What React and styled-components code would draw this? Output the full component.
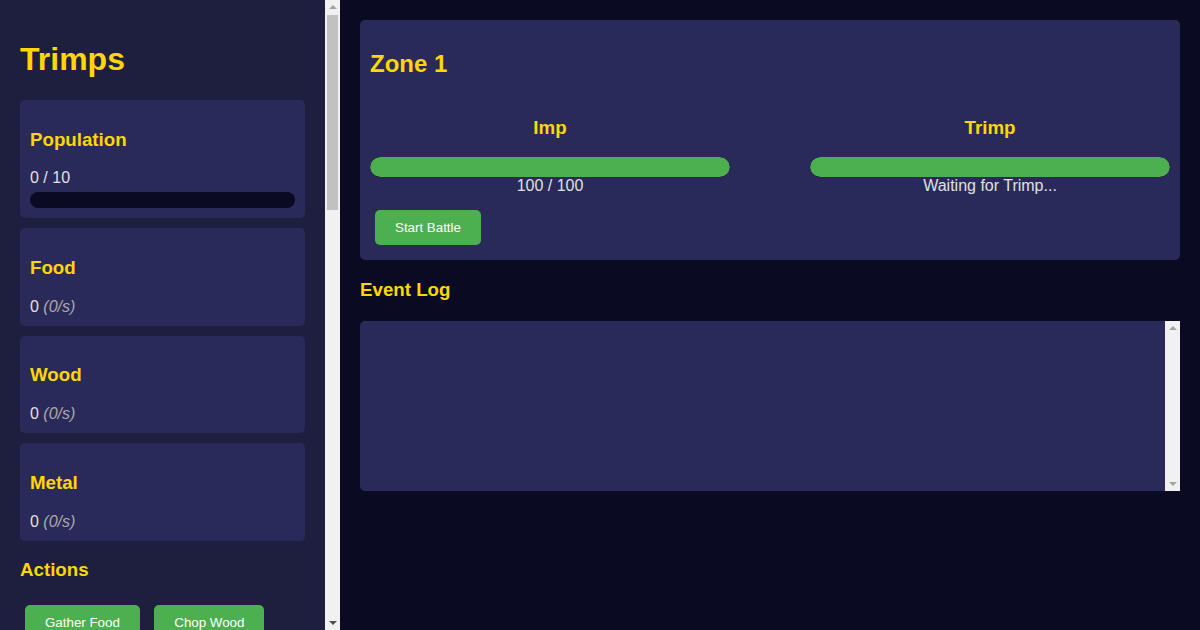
import styled, { createGlobalStyle } from 'styled-components';

const GlobalStyle = createGlobalStyle`
  body {
    margin: 0;
    background: #0a0a23;
    color: #e0e0e0;
    font-family: "Liberation Sans", Arial, sans-serif;
  }
  button {
    font-family: "Liberation Sans", Arial, sans-serif;
  }
`;

const resources = [
  { name: 'Food', amount: 0, rate: 0 },
  { name: 'Wood', amount: 0, rate: 0 },
  { name: 'Metal', amount: 0, rate: 0 },
];

// classic 15px scrollbar, drawn since the page shot hides the native one
function ScrollRail({ thumb, canDown }) {
  return (
    <Rail>
      <RailButton>
        <Arrow $dir="up" />
      </RailButton>
      {thumb ? <Thumb style={{ height: thumb }} /> : null}
      <RailSpace />
      <RailButton>
        <Arrow $dir="down" $active={canDown} />
      </RailButton>
    </Rail>
  );
}

export default function App() {
  return (
    <>
      <GlobalStyle />
      <Layout>
        <Sidebar>
          <SidebarBody>
            <Title>Trimps</Title>
            <Card>
              <CardTitle>Population</CardTitle>
              <div>0 / 10</div>
              <Track $height={16} $gap={5}>
                <Fill style={{ width: '0%' }} />
              </Track>
            </Card>
            {resources.map((r) => (
              <Card key={r.name}>
                <CardTitle>{r.name}</CardTitle>
                <div>
                  {r.amount} <Rate>({r.rate}/s)</Rate>
                </div>
              </Card>
            ))}
            <Section>Actions</Section>
            <div>
              <Button>Gather Food</Button> <Button>Chop Wood</Button>{' '}
              <Button>Mine Metal</Button> <Button>Breed Trimps</Button>
            </div>
          </SidebarBody>
          <ScrollRail thumb={195} canDown />
        </Sidebar>
        <Main>
          <ZoneCard>
            <ZoneTitle>Zone 1</ZoneTitle>
            <Battle>
              <Fighter>
                <CardTitle>Imp</CardTitle>
                <Track $height={20}>
                  <Fill style={{ width: '100%' }} />
                </Track>
                <div>100 / 100</div>
              </Fighter>
              <Fighter>
                <CardTitle>Trimp</CardTitle>
                <Track $height={20}>
                  <Fill style={{ width: '100%' }} />
                </Track>
                <div>Waiting for Trimp...</div>
              </Fighter>
            </Battle>
            <Controls>
              <Button>Start Battle</Button>
            </Controls>
          </ZoneCard>
          <Section>Event Log</Section>
          <Log>
            <LogBody />
            <ScrollRail />
          </Log>
        </Main>
      </Layout>
    </>
  );
}

const Layout = styled.div`
  display: flex;
  height: 100vh;
`;

const Sidebar = styled.aside`
  display: flex;
  width: 340px;
  flex-shrink: 0;
  height: 100vh;
  background: #1e1e3f;
`;

const SidebarBody = styled.div`
  flex: 1;
  min-width: 0;
  padding: 20px;
  overflow: hidden;
`;

const Rail = styled.div`
  display: flex;
  flex-direction: column;
  width: 15px;
  flex-shrink: 0;
  background: #f1f1f1;
`;

const RailButton = styled.div`
  display: flex;
  align-items: center;
  justify-content: center;
  height: 15px;
  flex-shrink: 0;
`;

const RailSpace = styled.div`
  flex: 1;
`;

const Thumb = styled.div`
  margin: 0 2px;
  background: #c1c1c1;
`;

const Arrow = styled.span`
  width: 0;
  height: 0;
  border-left: 4px solid transparent;
  border-right: 4px solid transparent;
  ${(p) =>
    p.$dir === 'up'
      ? `border-bottom: 4px solid #a3a3a3; margin-top: -1px;`
      : `border-top: 4px solid ${p.$active ? '#505050' : '#a3a3a3'}; margin-top: 1px;`}
`;

const Title = styled.h1`
  font-size: 2em;
  margin: 0.67em 0;
  color: #ffd700;
`;

const Card = styled.div`
  background: #2a2a5a;
  border-radius: 5px;
  padding: 10px;
  margin-bottom: 10px;
`;

const CardTitle = styled.h3`
  font-size: 1.17em;
  margin: 1em 0;
  color: #ffd700;
`;

const Section = styled.h3`
  font-size: 1.17em;
  margin: 1em 0;
  color: #ffd700;
`;

const Rate = styled.span`
  font-style: italic;
  color: #aaa;
`;

const Track = styled.div`
  height: ${(p) => p.$height}px;
  margin-top: ${(p) => p.$gap || 0}px;
  background: #0a0a23;
  border-radius: 10px;
  overflow: hidden;
`;

const Fill = styled.div`
  height: 100%;
  background: #4caf50;
  border-radius: 10px;
`;

const Button = styled.button`
  background: #4caf50;
  color: #fff;
  border: none;
  border-radius: 5px;
  padding: 10px 20px;
  margin: 5px;
  font-size: 13.333px;
  cursor: pointer;
`;

const Main = styled.main`
  flex: 1;
  padding: 20px;
`;

const ZoneCard = styled.div`
  background: #2a2a5a;
  border-radius: 5px;
  padding: 10px;
  margin-bottom: 10px;
`;

const ZoneTitle = styled.h2`
  font-size: 1.5em;
  margin: 0.83em 0;
  color: #ffd700;
`;

const Battle = styled.div`
  display: flex;
  justify-content: space-between;
  text-align: center;
`;

const Fighter = styled.div`
  width: 45%;
`;

const Controls = styled.div`
  margin-top: 10px;
`;

const Log = styled.div`
  display: flex;
  height: 170px;
  margin-top: 20px;
  background: #2a2a5a;
  border-radius: 5px 0 0 5px;
  overflow: hidden;
`;

const LogBody = styled.div`
  flex: 1;
  padding: 10px;
`;
